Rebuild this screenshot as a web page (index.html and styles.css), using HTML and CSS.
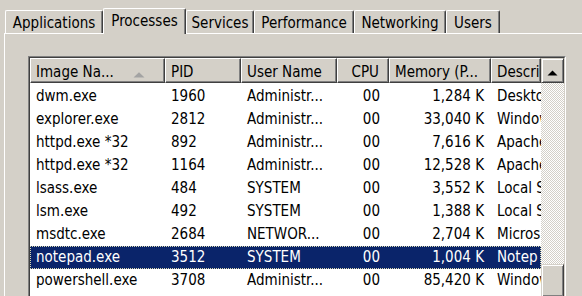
FILE: index.html
```
<!DOCTYPE html>
<html>
<head>
<meta charset="utf-8">
<link rel="stylesheet" href="styles.css">
</head>
<body>
<div class="tabs">
  <div class="tab t-app">Applications</div>
  <div class="tab tab-on t-proc">Processes</div>
  <div class="tab t-serv">Services</div>
  <div class="tab t-perf">Performance</div>
  <div class="tab t-net">Networking</div>
  <div class="tab t-users">Users</div>
</div>
<div class="panel">
  <div class="list">
    <div class="list-in">
      <div class="cols">
        <div class="hdr">
          <div class="hc hc-sort"><span>Image Na...</span><svg class="sort" width="12" height="6" viewBox="0 0 12 6"><polygon points="0.5,5.5 6,0.2 11.5,5.5" fill="#a3a3a3"/></svg></div>
          <div class="hc">PID</div>
          <div class="hc">User Name</div>
          <div class="hc hc-r">CPU</div>
          <div class="hc">Memory (P...</div>
          <div class="hc hc-clip">Descri</div>
        </div>
        <div class="rows">
          <div class="row"><div class="c">dwm.exe</div><div class="c">1960</div><div class="c">Administr...</div><div class="c c-cpu">00</div><div class="c c-mem">1,284 K</div><div class="c c-d">Desktop</div></div>
          <div class="row"><div class="c">explorer.exe</div><div class="c">2812</div><div class="c">Administr...</div><div class="c c-cpu">00</div><div class="c c-mem">33,040 K</div><div class="c c-d">Window</div></div>
          <div class="row"><div class="c">httpd.exe *32</div><div class="c">892</div><div class="c">Administr...</div><div class="c c-cpu">00</div><div class="c c-mem">7,616 K</div><div class="c c-d">Apache</div></div>
          <div class="row"><div class="c">httpd.exe *32</div><div class="c">1164</div><div class="c">Administr...</div><div class="c c-cpu">00</div><div class="c c-mem">12,528 K</div><div class="c c-d">Apache</div></div>
          <div class="row"><div class="c">lsass.exe</div><div class="c">484</div><div class="c">SYSTEM</div><div class="c c-cpu">00</div><div class="c c-mem">3,552 K</div><div class="c c-d">Local S</div></div>
          <div class="row"><div class="c">lsm.exe</div><div class="c">492</div><div class="c">SYSTEM</div><div class="c c-cpu">00</div><div class="c c-mem">1,388 K</div><div class="c c-d">Local S</div></div>
          <div class="row"><div class="c">msdtc.exe</div><div class="c">2684</div><div class="c">NETWOR...</div><div class="c c-cpu">00</div><div class="c c-mem">2,704 K</div><div class="c c-d">Micros</div></div>
          <div class="row row-sel"><div class="c">notepad.exe</div><div class="c">3512</div><div class="c">SYSTEM</div><div class="c c-cpu">00</div><div class="c c-mem">1,004 K</div><div class="c c-d">Notep</div></div>
          <div class="row"><div class="c">powershell.exe</div><div class="c">3708</div><div class="c">Administr...</div><div class="c c-cpu">00</div><div class="c c-mem">85,420 K</div><div class="c c-d">Window</div></div>
        </div>
      </div>
      <div class="vscroll">
        <div class="sbtn"><svg width="11" height="6" viewBox="0 0 11 6"><polygon points="0.5,5.5 5.5,0.5 10.5,5.5" fill="#000"/></svg></div>
        <div class="track"></div>
        <div class="thumb"></div>
      </div>
    </div>
  </div>
</div>
</body>
</html>
```

FILE: styles.css
```
html, body {
  margin: 0;
  padding: 0;
}
body {
  width: 582px;
  height: 296px;
  overflow: hidden;
  background: #d4d0c8;
  color: #000;
  font-family: "DejaVu Sans Condensed", "Liberation Sans", sans-serif;
  font-size: 15px;
}
.tabs {
  display: flex;
  align-items: flex-end;
  height: 33px;
  padding-left: 5px;
}
.tab {
  box-sizing: border-box;
  height: 23px;
  padding-top: 2px;
  line-height: 21px;
  text-align: center;
  white-space: nowrap;
  border-top: 1px solid #fff;
  border-left: 1px solid #fff;
  border-right: 1px solid #404040;
  border-radius: 2px 2px 0 0;
  box-shadow: inset -1px 0 0 #808080;
  background: #d4d0c8;
}
.tab-on {
  height: 26px;
  margin-bottom: -1px;
  position: relative;
  z-index: 1;
}
.t-app { width: 98px; }
.t-proc { width: 83px; }
.t-serv { width: 68px; }
.t-perf { width: 100px; }
.t-net { width: 92px; }
.t-users { width: 54px; }

.panel {
  margin-left: 4px;
  width: 578px;
  height: 263px;
  border-top: 1px solid #fff;
  border-left: 1px solid #fff;
  padding: 22px 0 0 23px;
  box-sizing: border-box;
  overflow: hidden;
}
.list {
  box-sizing: border-box;
  width: 538px;
  height: 240px;
  border: 1px solid;
  border-bottom: 0;
  border-color: #808080 #fff #fff #808080;
}
.list-in {
  box-sizing: border-box;
  height: 100%;
  border: 1px solid;
  border-bottom: 0;
  border-color: #404040 #d4d0c8 #d4d0c8 #404040;
  background: #fff;
  display: flex;
}
.cols {
  width: 511px;
  overflow: hidden;
}
.hdr, .row {
  display: grid;
  grid-template-columns: 135px 76px 96px 52px 102px 50px;
}
.hc {
  box-sizing: border-box;
  height: 25px;
  padding: 4px 6px 0 5px;
  line-height: 19px;
  white-space: nowrap;
  overflow: hidden;
  background: #d4d0c8;
  border: 1px solid;
  border-color: #fff #404040 #404040 #fff;
  box-shadow: inset -1px -1px 0 #808080;
}
.hc-sort {
  display: flex;
  justify-content: space-between;
  padding-right: 19px;
}
.sort {
  margin-top: 9px;
  flex: none;
}
.hc-r {
  text-align: right;
  padding-right: 9px;
}
.hc-clip {
  padding-right: 0;
}
.rows {
  padding-top: 2px;
}
.row {
  height: 23px;
  line-height: 23px;
}
.c {
  padding: 0 6px;
  white-space: nowrap;
  overflow: hidden;
}
.c-cpu {
  text-align: right;
  padding-right: 9px;
}
.c-mem {
  text-align: right;
  padding-right: 7px;
}
.c-d {
  padding-right: 0;
}
.row-sel {
  background: #0a246a;
  color: #fff;
  outline: 1px dotted #d8d8b0;
  outline-offset: -1px;
}
.vscroll {
  width: 23px;
  display: flex;
  flex-direction: column;
}
.sbtn, .thumb {
  box-sizing: border-box;
  background: #d4d0c8;
  border: 1px solid;
  border-color: #d4d0c8 #404040 #404040 #d4d0c8;
  box-shadow: inset 1px 1px 0 #fff, inset -1px -1px 0 #808080;
}
.sbtn {
  height: 25px;
  display: flex;
  justify-content: center;
  align-items: flex-start;
  padding-top: 11px;
}
.track {
  height: 181px;
  background-color: #fff;
  background-image: conic-gradient(#fff 25%, #d4d0c8 0 50%, #fff 0 75%, #d4d0c8 0);
  background-size: 2px 2px;
}
.thumb {
  flex: 1;
  border-bottom: 0;
}
```
